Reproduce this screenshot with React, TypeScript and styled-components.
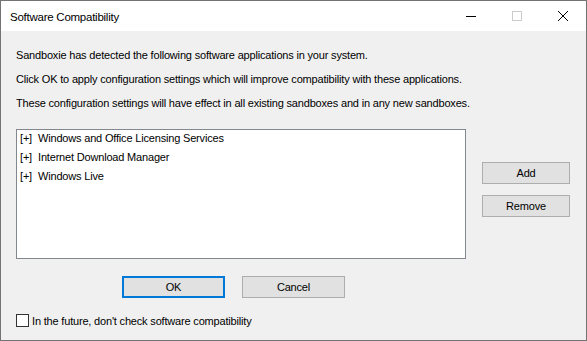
import styled, { createGlobalStyle } from "styled-components";

const GlobalStyle = createGlobalStyle`
  html, body {
    margin: 0;
    padding: 0;
    background: #ffffff;
  }
  * {
    box-sizing: border-box;
  }
`;

const apps = [
  "Windows and Office Licensing Services",
  "Internet Download Manager",
  "Windows Live",
];

const notes = [
  "Sandboxie has detected the following software applications in your system.",
  "Click OK to apply configuration settings which will improve compatibility with these applications.",
  "These configuration settings will have effect in all existing sandboxes and in any new sandboxes.",
];

const App = () => {
  return (
    <>
      <GlobalStyle />
      <Window>
        <TitleBar>
          <Title>Software Compatibility</Title>
          <Caption>
            <CaptionButton>
              <svg width="10" height="10" viewBox="0 0 10 10">
                <path d="M0 5.5H10" stroke="#000" strokeWidth="1" />
              </svg>
            </CaptionButton>
            <CaptionButton>
              <svg width="10" height="10" viewBox="0 0 10 10">
                <rect x="0.5" y="0.5" width="9" height="9" fill="none" stroke="#cccccc" strokeWidth="1" />
              </svg>
            </CaptionButton>
            <CaptionButton>
              <svg width="10" height="10" viewBox="0 0 10 10">
                <path d="M0 0L10 10M10 0L0 10" stroke="#000" strokeWidth="1" />
              </svg>
            </CaptionButton>
          </Caption>
        </TitleBar>
        <Body>
          {notes.map((n) => (
            <Note key={n}>{n}</Note>
          ))}
          <Middle>
            <ListBox>
              {apps.map((a) => (
                <ListItem key={a}>
                  <Bracket>[+]</Bracket>
                  {a}
                </ListItem>
              ))}
            </ListBox>
            <SideButtons>
              <Button>Add</Button>
              <Button>Remove</Button>
            </SideButtons>
          </Middle>
          <ActionRow>
            <Button $wide $primary>
              OK
            </Button>
            <Button $wide>Cancel</Button>
          </ActionRow>
          <CheckRow>
            <CheckBox />
            <span>In the future, don't check software compatibility</span>
          </CheckRow>
        </Body>
      </Window>
    </>
  );
};

const Window = styled.div`
  width: 587px;
  height: 341px;
  display: flex;
  flex-direction: column;
  border: 1px solid #737373;
  background: #f0f0f0;
  font-family: "Liberation Sans", Arial, sans-serif;
  font-size: 11px;
  letter-spacing: -0.18px;
  color: #000;
`;
const TitleBar = styled.div`
  height: 30px;
  flex: none;
  display: flex;
  align-items: center;
  background: #ffffff;
  padding-left: 9px;
`;
const Title = styled.div`
  flex: 1;
  font-family: "Liberation Sans", Arial, sans-serif;
  font-size: 11.5px;
  letter-spacing: -0.25px;
  padding-top: 1px;
`;
const Caption = styled.div`
  display: flex;
  height: 100%;
`;
const CaptionButton = styled.div`
  width: 46px;
  height: 100%;
  display: flex;
  align-items: center;
  justify-content: center;
  svg {
    display: block;
  }
`;
const Body = styled.div`
  flex: 1;
  display: flex;
  flex-direction: column;
  padding: 12px 15px 0;
`;
const Note = styled.div`
  height: 24px;
  line-height: 24px;
  white-space: nowrap;
`;
const Middle = styled.div`
  display: flex;
  margin-top: 14px;
  gap: 16px;
`;
const ListBox = styled.div`
  width: 450px;
  height: 130px;
  background: #ffffff;
  border: 1px solid #828790;
  padding: 0 3px;
`;
const ListItem = styled.div`
  height: 19px;
  line-height: 17px;
  white-space: nowrap;
`;
const Bracket = styled.span`
  display: inline-block;
  width: 18px;
`;
const SideButtons = styled.div`
  display: flex;
  flex-direction: column;
  gap: 11px;
  padding-top: 33px;
`;
const Button = styled.button<{ $wide?: boolean; $primary?: boolean }>`
  width: ${(p) => (p.$wide ? "103px" : "88px")};
  height: 22px;
  margin: 0;
  padding: 0;
  font-family: "Liberation Sans", Arial, sans-serif;
  font-size: 11px;
  letter-spacing: -0.18px;
  color: #000;
  background: #e1e1e1;
  border: ${(p) => (p.$primary ? "2px solid #0078d7" : "1px solid #adadad")};
`;
const ActionRow = styled.div`
  display: flex;
  gap: 17px;
  margin-top: 17px;
  padding-left: 106px;
`;
const CheckRow = styled.div`
  display: flex;
  align-items: center;
  gap: 3px;
  margin-top: 16px;
  white-space: nowrap;
`;
const CheckBox = styled.span`
  width: 13px;
  height: 13px;
  background: #ffffff;
  border: 1px solid #333333;
`;

export default App;
